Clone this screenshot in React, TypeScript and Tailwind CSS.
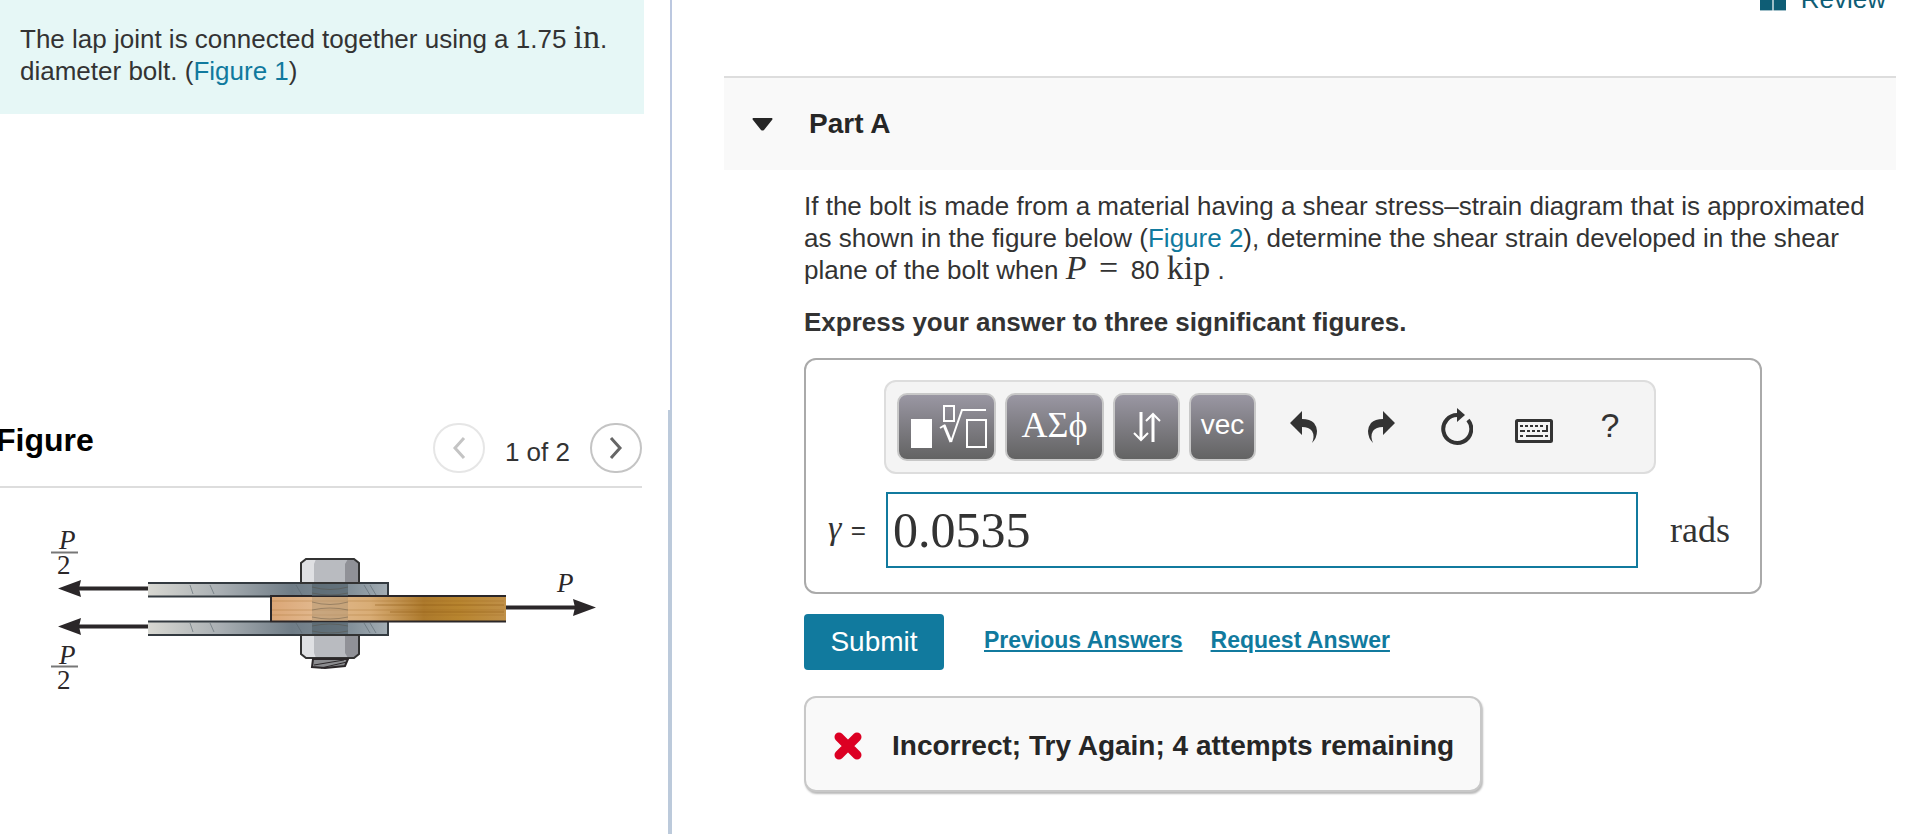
import { useState } from 'react';

function LapJoint() {
  return (
    <svg
      viewBox="0 487 642 220"
      className="block w-full"
      role="img"
      aria-label="Lap joint loaded by P"
      fontFamily="'Liberation Serif', serif"
      fontSize="27"
      fill="#2b2729"
    >
      <defs>
        <linearGradient id="plate" x1="0" x2="1">
          <stop offset="0" stopColor="#d8d8d2" />
          <stop offset="0.3" stopColor="#a9afb3" />
          <stop offset="0.6" stopColor="#6f7c86" />
          <stop offset="0.85" stopColor="#84919a" />
          <stop offset="1" stopColor="#a3adb4" />
        </linearGradient>
        <linearGradient id="wood" x1="0" x2="1">
          <stop offset="0" stopColor="#dba676" />
          <stop offset="0.2" stopColor="#e2b98f" />
          <stop offset="0.42" stopColor="#d9ad76" />
          <stop offset="0.65" stopColor="#ad7a2c" />
          <stop offset="0.8" stopColor="#b8852f" />
          <stop offset="1" stopColor="#c09048" />
        </linearGradient>
      </defs>

      {/* Load labels */}
      <text x="59" y="548" fontStyle="italic">P</text>
      <path d="M51 551.500h27" stroke="#777" strokeWidth="2" />
      <text x="57" y="573">2</text>
      <text x="59" y="663" fontStyle="italic">P</text>
      <path d="M51 665.500h27" stroke="#777" strokeWidth="2" />
      <text x="57" y="688">2</text>
      <text x="557" y="591" fontStyle="italic">P</text>

      {/* Arrows */}
      <path d="M78 587.500H148M78 625.500H148M506 606.500H576" stroke="#2b2729" strokeWidth="4" />
      <path d="M58 587.500l23-8.500-2 8.500 2 8.500zM58 625.500l23-8.500-2 8.500 2 8.500zM596 606.500l-23-8.500 2 8.500-2 8.500z" />

      {/* Steel plates */}
      <path d="M148 582h240v14H148zM148 620.500h240v14H148z" fill="url(#plate)" />
      <path d="M148 582h240v13M148 595.500h122M148 620.500h122M388 620.500v13.500H148" fill="none" stroke="#333a40" strokeWidth="2" />
      <path d="M190 584l3 9M210 584l4 9M296 584l6 10M364 584l6 10M370 584l6 10M190 622l3 9M210 622l4 9M296 622l6 10M364 622l6 10M370 622l6 10" stroke="#5c6870" strokeWidth="1" opacity="0.6" />

      {/* Wood member */}
      <path d="M271 595h235v25H271z" fill="url(#wood)" />
      <path d="M272 600h232M272 609h232M272 614h232" stroke="#9b6521" strokeWidth="1" opacity="0.3" />
      <path d="M375 604h129M390 611h114" stroke="#8b5510" strokeWidth="2" opacity="0.25" />
      <path d="M506 595H271v25.500h235" fill="none" stroke="#2b2729" strokeWidth="2" />

      {/* Bolt shank seen through the members */}
      <path d="M312 583h36v12h-36zM312 621h36v12h-36z" fill="#53626c" opacity="0.65" />
      <path d="M312 596h36v24h-36z" fill="#b89a75" opacity="0.6" />
      <path d="M312 586q18 5 36 0M312 592q18 4 36 0M312 601q18 5 36 0M312 609q18-4 36 0M312 616q18 4 36 0M312 625q18-4 36 0M312 630q18 4 36 0" fill="none" stroke="#544a3d" strokeWidth="1" opacity="0.4" />

      {/* Head and nut */}
      <path d="M301 582v-20l5-4h48l5 4v20z" fill="#b9bbc0" />
      <path d="M301 582v-20l5-4h10l-2 5v19z" fill="#dfe0e3" />
      <path d="M345 582v-19l3-5h6l5 4v20z" fill="#909197" />
      <path d="M301 582v-20l5-4h48l5 4v20z" fill="none" stroke="#333" strokeWidth="2" />
      <path d="M301 634v19l5 4h48l5-4v-19z" fill="#b9bbc0" />
      <path d="M301 634v19l5 4h10l-2-5v-18z" fill="#dfe0e3" />
      <path d="M345 634v18l3 5h6l5-4v-19z" fill="#909197" />
      <path d="M301 634v19l5 4h48l5-4v-19z" fill="none" stroke="#333" strokeWidth="2" />

      {/* Thread end */}
      <path d="M313 658h35l-3 7-20 2-13-1z" fill="#8b8c8f" stroke="#2b2729" strokeWidth="2" />
      <path d="M314 664l30-5M321 667l26-6" stroke="#2b2729" strokeWidth="1" />
    </svg>
  );
}

function TemplateIcon() {
  return (
    <svg width="80" height="44" viewBox="0 0 80 44" fill="none" stroke="white" strokeWidth="2">
      <path d="M4 14h21v29H4z" fill="white" stroke="none" />
      <path d="M37 1h10v15H37zM60 15h19v27H60z" />
      <path d="M33 23l5-3" />
      <path d="M37 20l7 17" strokeWidth="3" />
      <path d="M44 37L55 5h24" />
    </svg>
  );
}

const blackIcon = 'flex h-16 w-12 items-center justify-center text-[#333]';
const grayButton =
  'flex h-[68px] items-center justify-center rounded-[10px] border-2 border-[#c8c8c8] bg-gradient-to-b from-[#9a97a3] to-[#636363] text-white';
// zero line height keeps the larger serif from stretching its line
const math = "font-['Liberation_Serif',serif] text-[34px] leading-[0]";

export default function App() {
  const [answer, setAnswer] = useState('0.0535');

  return (
    <div className="flex min-h-screen overflow-hidden bg-white font-['Liberation_Sans',Arial,sans-serif] text-[26px] leading-8 text-[#333]">
      {/* Problem statement and figure */}
      <aside className="w-[668px] shrink-0 pr-6">
        <div className="h-[410px]">
          <p className="bg-[#e6f7f6] pt-[23px] pb-[27px] pl-5">
            The lap joint is connected together using a 1.75 <span className={math}>in</span>.<br />
            diameter bolt. (<a href="#figure" className="text-[#117a9e]">Figure 1</a>)
          </p>
        </div>
        <section id="figure" className="mr-[2px]">
          <div className="flex h-[78px] items-center justify-between border-b-2 border-[#ddd]">
            <h2 className="-ml-1 pb-4 text-[32px] font-bold text-black">Figure</h2>
            <div className="flex items-center gap-5">
              <button aria-label="Previous figure" disabled className="flex h-[50px] w-[52px] items-center justify-center rounded-full border-2 border-[#e6e6e6] text-[#c4c4c4]">
                <svg width="14" height="24" viewBox="0 0 14 24" fill="none" stroke="currentColor" strokeWidth="3">
                  <path d="M12 2L3 12l9 10" />
                </svg>
              </button>
              <span className="pt-2">1 of 2</span>
              <button aria-label="Next figure" className="flex h-[50px] w-[52px] items-center justify-center rounded-full border-2 border-[#c4c4c4] text-[#666]">
                <svg width="14" height="24" viewBox="0 0 14 24" fill="none" stroke="currentColor" strokeWidth="3">
                  <path d="M2 2l9 10-9 10" />
                </svg>
              </button>
            </div>
          </div>
          <LapJoint />
        </section>
      </aside>

      {/* Divider */}
      <div className="flex w-1 shrink-0 flex-col items-end">
        <div className="h-[410px] w-[2px] bg-[#bcc8e0]" />
        <div className="w-1 grow bg-[#bccadb]" />
      </div>

      {/* Question */}
      <main className="min-w-0 grow pr-[34px] pl-[52px]">
        <div className="-mt-[17px] flex h-[93px] items-start justify-end pr-[10px]">
          <a href="#review" className="flex items-center gap-[14px] text-[#0e5d75]">
            <svg width="28" height="24" viewBox="0 0 28 24" fill="currentColor">
              <path d="M1 1h12v22H1zM15 1h12v22H15z" />
              <path d="M1 23h12l1 1 1-1h12v1H1zM13 1h2v22h-2z" opacity="0.4" />
            </svg>
            Review
          </a>
        </div>

        <header className="flex h-[94px] items-center gap-9 border-t-2 border-[#ddd] bg-[#f9f9f9] pl-7 text-[#262626]">
          <button aria-label="Collapse Part A">
            <svg width="21" height="13" viewBox="0 0 21 13" fill="currentColor">
              <path d="M1 0h19q1 1 0 2l-8 10q-1.500 1-3 0L1 2q-1-1 0-2z" />
            </svg>
          </button>
          <h1 className="text-[28px] font-bold">Part A</h1>
        </header>

        <div className="pt-5 pl-20">
          <p>
            If the bolt is made from a material having a shear stress–strain diagram that is approximated<br />
            as shown in the figure below (<a href="#figure2" className="text-[#117a9e]">Figure 2</a>), determine the shear strain developed in the shear<br />
            plane of the bolt when{' '}
            <span className={`${math} mr-1`}><i className="mr-1">P</i> = </span>80{' '}
            <span className={math}>kip</span> .
          </p>
          <p className="mt-5 font-bold">Express your answer to three significant figures.</p>

          <div className="mt-5 w-full max-w-[958px] rounded-xl border-2 border-[#aaa] pt-5 pr-[30px] pb-6 pl-[22px]">
            <div className="mr-[74px] ml-14 flex h-[94px] items-center rounded-xl border-2 border-[#ddd] bg-[#f4f4f4] pr-5 pl-[11px]">
              <div className="flex gap-[9px]">
                <button aria-label="Templates" className={`${grayButton} w-[99px]`}><TemplateIcon /></button>
                <button className={`${grayButton} w-[99px] pb-1 font-['Liberation_Serif',serif] text-[36px]`}>ΑΣϕ</button>
                <button aria-label="Subscript and superscript" className={`${grayButton} w-[67px]`}>
                  <svg width="28" height="32" viewBox="0 0 28 32" fill="none" stroke="white" strokeWidth="3">
                    <path d="M8 1v27M20 31V4" />
                    <path d="M1 22l7 7 7-7M13 10l7-7 7 7" strokeWidth="2" />
                  </svg>
                </button>
                <button className={`${grayButton} w-[67px] pb-1 text-[28px]`}>vec</button>
              </div>
              <div className="ml-6 flex grow justify-between">
                <button aria-label="Undo" className={blackIcon}>
                  <svg width="28" height="32" viewBox="0 0 28 32" fill="currentColor">
                    <path d="M0 12L12 0v8q8 0 12 4 3 4 3 8 0 7-5 12 3-7 0-12-3-4-10-4v8z" />
                  </svg>
                </button>
                <button aria-label="Redo" className={blackIcon}>
                  <svg width="28" height="32" viewBox="0 0 28 32" fill="currentColor">
                    <path d="M28 12L16 0v8q-8 0-12 4-3 4-3 8 0 7 5 12-3-7 0-12 3-4 10-4v8z" />
                  </svg>
                </button>
                <button aria-label="Reset" className={blackIcon}>
                  <svg width="32" height="38" viewBox="0 0 32 38" fill="none" stroke="currentColor">
                    <path d="M17 7A14 14 0 1 0 27 12" strokeWidth="4" />
                    <path d="M16 0l8 7-8 7z" fill="currentColor" stroke="none" />
                  </svg>
                </button>
                <button aria-label="Keyboard" className={`${blackIcon} pt-2`}>
                  <svg width="38" height="24" viewBox="0 0 38 24" fill="none" stroke="currentColor">
                    <rect x="1.500" y="1.500" width="35" height="21" rx="1" strokeWidth="3" />
                    <path d="M5 7h3M10 7h3M15 7h3M20 7h3M25 7h3" strokeWidth="2" />
                    <path d="M5 12h5M12 12h3M17 12h3M22 12h3M27 12h6" strokeWidth="2" />
                    <path d="M32 6v6M5 17h3M11 17h17M30 17h3" strokeWidth="2" />
                  </svg>
                </button>
                <button aria-label="Help" className={`${blackIcon} pb-1 text-[34px]`}>?</button>
              </div>
            </div>
            <div className="mt-[18px] flex items-center">
              <label htmlFor="answer" className="w-[58px] shrink-0 whitespace-nowrap">
                <i className={`${math} mr-[2px]`}>γ</i> =
              </label>
              <input
                id="answer"
                value={answer}
                onChange={(e) => setAnswer(e.target.value)}
                className="h-[76px] min-w-0 grow border-2 border-[#117a9e] px-[5px] font-['Liberation_Serif',serif] text-[50px] outline-none"
              />
              <span className="ml-8 font-['Liberation_Serif',serif] text-[36px]">rads</span>
            </div>
          </div>

          <div className="mt-5 flex items-center text-[23px] font-bold text-[#117a9e]">
            <button className="mr-10 h-14 w-[140px] rounded-sm bg-[#117a9e] text-[28px] font-normal text-white">Submit</button>
            <a href="#previous" className="mr-7 pb-1 underline">Previous Answers</a>
            <a href="#request" className="pb-1 underline">Request Answer</a>
          </div>

          <div role="status" className="mt-[26px] flex h-24 w-fit items-center gap-[30px] rounded-xl border-2 border-[#c8c8c8] bg-[#f9f9f9] pt-1 pr-[26px] pl-7 text-[28px] font-bold text-[#262626] shadow-[1px_2px_2px_#bbb]">
            <svg width="28" height="28" viewBox="0 0 28 28" fill="none" stroke="#dc0023" strokeWidth="9">
              <path d="M5 5l18 18M23 5L5 23" strokeLinecap="round" />
            </svg>
            Incorrect; Try Again; 4 attempts remaining
          </div>
        </div>
      </main>
    </div>
  );
}
